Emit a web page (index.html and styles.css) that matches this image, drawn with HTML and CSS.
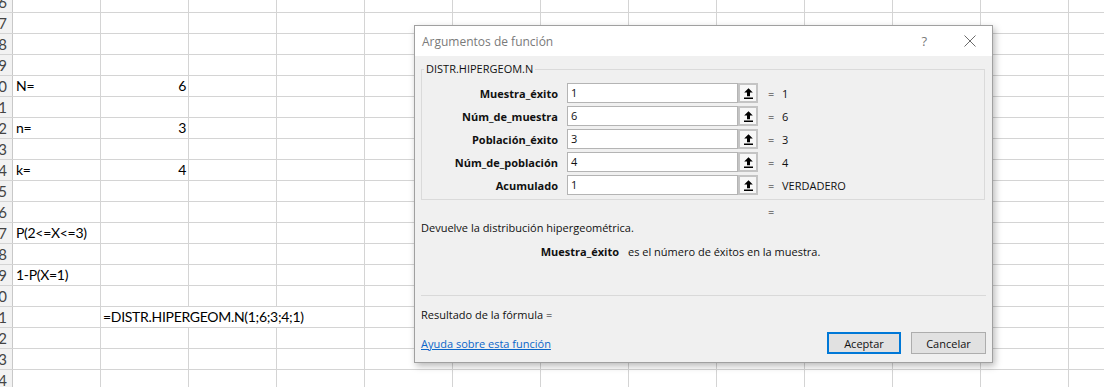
FILE: index.html
```html
<!DOCTYPE html>
<html lang="es">
  <head>
    <meta charset="UTF-8" />
    <title>Argumentos de función</title>
    <link rel="stylesheet" href="styles.css">
  </head>
  <body>
    <div class="sheet">
      <div class="row"><div class="rh">6</div></div>
      <div class="row"><div class="rh">7</div></div>
      <div class="row"><div class="rh">8</div></div>
      <div class="row"><div class="rh">9</div></div>
      <div class="row"><div class="rh">10</div><div class="cell">N=</div><div class="cell num">6</div></div>
      <div class="row"><div class="rh">11</div></div>
      <div class="row"><div class="rh">12</div><div class="cell">n=</div><div class="cell num">3</div></div>
      <div class="row"><div class="rh">13</div></div>
      <div class="row"><div class="rh">14</div><div class="cell">k=</div><div class="cell num">4</div></div>
      <div class="row"><div class="rh">15</div></div>
      <div class="row"><div class="rh">16</div></div>
      <div class="row"><div class="rh">17</div><div class="cell wide">P(2&lt;=X&lt;=3)</div></div>
      <div class="row"><div class="rh">18</div></div>
      <div class="row"><div class="rh">19</div><div class="cell">1-P(X=1)</div></div>
      <div class="row"><div class="rh">20</div></div>
      <div class="row"><div class="rh">21</div><div class="cell"></div><div class="cell formula">=DISTR.HIPERGEOM.N(1;6;3;4;1)</div></div>
      <div class="row"><div class="rh">22</div></div>
      <div class="row"><div class="rh">23</div></div>
      <div class="row"><div class="rh">24</div></div>
    </div>

    <div class="dialog">
      <div class="titlebar">
        <span class="title">Argumentos de función</span>
        <span class="help">?</span>
        <svg class="close" width="12" height="12" viewBox="0 0 12 12">
          <path d="M0.5 0.5 L11.5 11.5 M11.5 0.5 L0.5 11.5" stroke="#6b6b6b" stroke-width="1" fill="none" />
        </svg>
      </div>

      <div class="dialog-body">
        <fieldset class="group">
          <legend>DISTR.HIPERGEOM.N</legend>

          <div class="arg">
            <span class="arg-name">Muestra_éxito</span>
            <span class="arg-input">1</span>
            <span class="ref-btn"><svg width="9" height="11" viewBox="0 0 9 11"><path d="M4.5 0.3 L8.8 4.6 L6 4.6 L6 8.2 L3 8.2 L3 4.6 L0.2 4.6 Z" fill="#000" /><rect x="0" y="9.5" width="9" height="1.5" fill="#000" /></svg></span>
            <span class="eq">=</span>
            <span class="arg-val">1</span>
          </div>
          <div class="arg">
            <span class="arg-name">Núm_de_muestra</span>
            <span class="arg-input">6</span>
            <span class="ref-btn"><svg width="9" height="11" viewBox="0 0 9 11"><path d="M4.5 0.3 L8.8 4.6 L6 4.6 L6 8.2 L3 8.2 L3 4.6 L0.2 4.6 Z" fill="#000" /><rect x="0" y="9.5" width="9" height="1.5" fill="#000" /></svg></span>
            <span class="eq">=</span>
            <span class="arg-val">6</span>
          </div>
          <div class="arg">
            <span class="arg-name">Población_éxito</span>
            <span class="arg-input">3</span>
            <span class="ref-btn"><svg width="9" height="11" viewBox="0 0 9 11"><path d="M4.5 0.3 L8.8 4.6 L6 4.6 L6 8.2 L3 8.2 L3 4.6 L0.2 4.6 Z" fill="#000" /><rect x="0" y="9.5" width="9" height="1.5" fill="#000" /></svg></span>
            <span class="eq">=</span>
            <span class="arg-val">3</span>
          </div>
          <div class="arg">
            <span class="arg-name">Núm_de_población</span>
            <span class="arg-input">4</span>
            <span class="ref-btn"><svg width="9" height="11" viewBox="0 0 9 11"><path d="M4.5 0.3 L8.8 4.6 L6 4.6 L6 8.2 L3 8.2 L3 4.6 L0.2 4.6 Z" fill="#000" /><rect x="0" y="9.5" width="9" height="1.5" fill="#000" /></svg></span>
            <span class="eq">=</span>
            <span class="arg-val">4</span>
          </div>
          <div class="arg">
            <span class="arg-name">Acumulado</span>
            <span class="arg-input">1</span>
            <span class="ref-btn"><svg width="9" height="11" viewBox="0 0 9 11"><path d="M4.5 0.3 L8.8 4.6 L6 4.6 L6 8.2 L3 8.2 L3 4.6 L0.2 4.6 Z" fill="#000" /><rect x="0" y="9.5" width="9" height="1.5" fill="#000" /></svg></span>
            <span class="eq">=</span>
            <span class="arg-val">VERDADERO</span>
          </div>
        </fieldset>

        <div class="result-eq"><span class="eq">=</span></div>
        <p class="desc">Devuelve la distribución hipergeométrica.</p>
        <div class="arg-help">
          <b>Muestra_éxito</b>
          <span>es el número de éxitos en la muestra.</span>
        </div>

        <div class="sep"></div>

        <div class="formula-result">Resultado de la fórmula =</div>

        <div class="footer">
          <a href="#" class="help-link">Ayuda sobre esta función</a>
          <div class="buttons">
            <button class="btn primary">Aceptar</button>
            <button class="btn">Cancelar</button>
          </div>
        </div>
      </div>
    </div>
  </body>
</html>
```

FILE: styles.css
```css
* {
  box-sizing: border-box;
}

body {
  margin: 0;
  width: 1104px;
  height: 387px;
  overflow: hidden;
  background-color: #ffffff;
  position: relative;
}

/* spreadsheet */

.sheet {
  margin-top: -8px;
  font-family: Lato, "Liberation Sans", sans-serif;
  font-size: 14px;
  letter-spacing: -0.3px;
  color: #000;
  background-image: repeating-linear-gradient(
    to right,
    transparent 0 87px,
    #d4d4d4 87px 88px
  );
  background-position: 13px 0;
}

.row {
  display: grid;
  grid-template-columns: 13px repeat(12, 88px);
  height: 21px;
  border-bottom: 1px solid #d4d4d4;
}

.rh {
  display: flex;
  justify-content: flex-end;
  align-items: flex-end;
  overflow: hidden;
  white-space: nowrap;
  padding-right: 5px;
  padding-bottom: 1px;
  background-color: #f2f2f2;
  color: #444;
  border-right: 1px solid #c8c8c8;
  font-size: 15px;
  letter-spacing: 0;
  line-height: 18px;
}

.cell {
  padding: 0 3px 0 3px;
  line-height: 20px;
  white-space: nowrap;
}

.cell.num {
  text-align: right;
  padding-right: 3px;
}

.cell.formula {
  grid-column: 3 / span 3;
  margin-right: 1px;
  background-color: #fff;
  padding-left: 2px;
}

/* dialog */

.dialog {
  position: absolute;
  left: 414px;
  top: 25px;
  width: 579px;
  height: 338px;
  border: 1px solid #a0a0a0;
  background-color: #f0f0f0;
  box-shadow: 2px 3px 7px rgba(0, 0, 0, 0.28);
  font-family: "Open Sans", "Noto Sans", sans-serif;
  font-size: 11px;
  color: #111;
  display: flex;
  flex-direction: column;
}

.titlebar {
  height: 30px;
  background-color: #fff;
  display: flex;
  align-items: center;
  padding-left: 7px;
}

.title {
  font-size: 12px;
  color: #7a7a7a;
  flex: 1;
}

.help {
  color: #7a7a7a;
  font-size: 13px;
  margin-right: 37px;
}

.close {
  margin-right: 16px;
}

.dialog-body {
  padding: 5px 6px 0 6px;
  flex: 1;
}

.group {
  margin: 0;
  padding: 6px 0 4px 0;
  border: 1px solid #dadada;
  width: 564px;
}

.group legend {
  margin-left: 2px;
  padding: 0 2px;
  line-height: 16px;
  font-size: 11px;
}

.arg {
  display: flex;
  align-items: center;
  height: 20px;
  margin-bottom: 3px;
}

.arg:last-child {
  margin-bottom: 0;
}

.arg-name {
  width: 136px;
  text-align: right;
  font-weight: bold;
  margin-right: 9px;
}

.arg-input {
  width: 171px;
  height: 20px;
  border: 1px solid #b4b4b4;
  background-color: #fff;
  padding-left: 3px;
  line-height: 18px;
}

.ref-btn {
  width: 20px;
  height: 20px;
  border: 2px solid #c4c4c4;
  background-color: #f7f7f7;
  display: flex;
  align-items: center;
  justify-content: center;
}

.eq {
  margin-left: 10px;
  width: 14px;
}

.result-eq {
  height: 16px;
  line-height: 16px;
  margin-top: 4px;
  padding-left: 347px;
}

.result-eq .eq {
  margin-left: 0;
}

.desc {
  margin: 0;
  line-height: 16px;
}

.arg-help {
  display: flex;
  margin-top: 8px;
  line-height: 16px;
}

.arg-help b {
  width: 198px;
  text-align: right;
  margin-right: 9px;
}

.sep {
  margin-top: 35px;
  height: 1px;
  width: 565px;
  background-color: #d9d9d9;
}

.formula-result {
  margin-top: 11px;
  line-height: 16px;
}

.footer {
  margin-top: 9px;
  display: flex;
  align-items: center;
  justify-content: space-between;
}

.help-link {
  color: #0b66c9;
  text-decoration: underline;
}

.buttons {
  display: flex;
  gap: 10px;
}

.btn {
  width: 75px;
  height: 22px;
  border: 1px solid #adadad;
  background-color: #e1e1e1;
  font-family: inherit;
  font-size: 11px;
  color: #111;
  padding: 0;
}

.btn.primary {
  width: 74px;
  border: 2px solid #0078d7;
}
```
